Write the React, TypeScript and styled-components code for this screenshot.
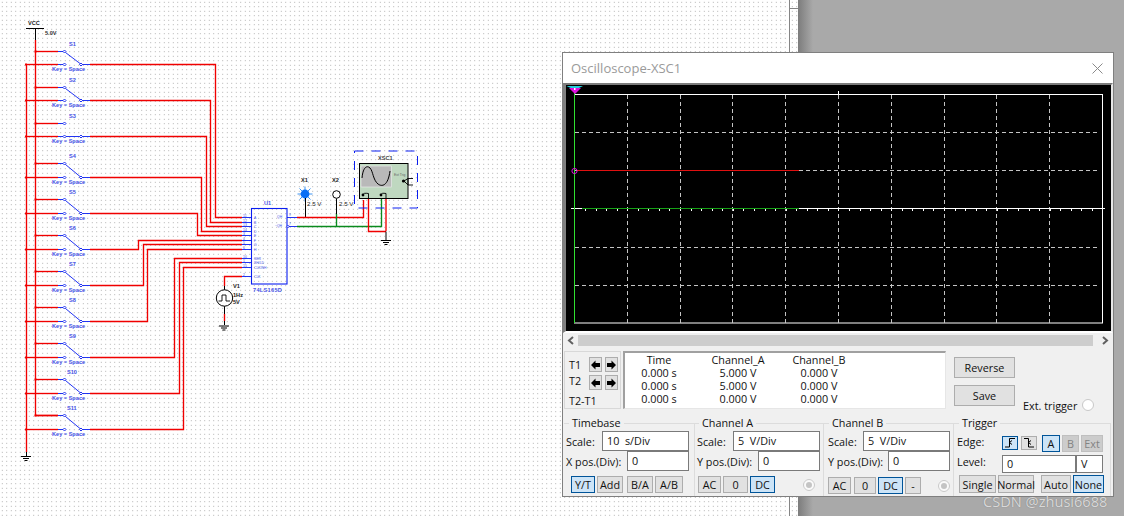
// App.tsx
import React from 'react';
import styled, { createGlobalStyle } from 'styled-components';

const GlobalStyle = createGlobalStyle`
  html, body {
    margin: 0;
    padding: 0;
    background: #a9a9a9;
  }
  body {
    font-family: "Open Sans", "Liberation Sans", sans-serif;
    font-size: 10.8px;
    color: #111;
  }
`;

const RED = '#f00000';
const GREEN = '#0a8a1e';
const BLUE = '#0a1ef0';
const LABEL = '#4652e6';

const redWire = { fill: 'none', stroke: RED, strokeWidth: 1.35 } as const;
const greenWire = { fill: 'none', stroke: GREEN, strokeWidth: 1.35 } as const;

// top contact y, bottom contact y, riser x, chip pin y
const switches = [
  { name: 'S1', top: 51, bottom: 64, riser: 215.5, pin: 217.5 },
  { name: 'S2', top: 87, bottom: 100, riser: 210.5, pin: 222.5 },
  { name: 'S3', top: 123, bottom: 136, riser: 206.5, pin: 226.5, closed: true },
  { name: 'S4', top: 163, bottom: 177, riser: 201.5, pin: 231.5 },
  { name: 'S5', top: 199, bottom: 213, riser: 197.5, pin: 235.5 },
  { name: 'S6', top: 235, bottom: 249, riser: 138.5, pin: 240.5 },
  { name: 'S7', top: 271, bottom: 285, riser: 143.5, pin: 244.5 },
  { name: 'S8', top: 307, bottom: 321, riser: 147.5, pin: 249.5 },
  { name: 'S9', top: 343, bottom: 357, riser: 174.5, pin: 258.5 },
  { name: 'S10', top: 379, bottom: 393, riser: 179.5, pin: 262.5 },
  { name: 'S11', top: 415, bottom: 429, riser: 183.5, pin: 267.5 },
];

const chipPins = [
  ['11', 'A', 217.5], ['12', 'B', 222.5], ['13', 'C', 226.5], ['14', 'D', 231.5],
  ['3', 'E', 235.5], ['4', 'F', 240.5], ['5', 'G', 244.5], ['6', 'H', 249.5],
  ['10', 'SER', 258.5], ['1', 'SH/LD', 262.5], ['15', 'CLKINH', 267.5], ['2', 'CLK', 276.5],
] as const;

const Ground = ({ x, y }: { x: number; y: number }) => (
  <g stroke="#000" strokeWidth="1">
    <path d={`M${x - 5} ${y}H${x + 5}M${x - 3} ${y + 2}H${x + 3}M${x - 1.5} ${y + 4}H${x + 1.5}`} />
  </g>
);

const Switch = ({ s }: { s: (typeof switches)[number] }) => {
  const { name, riser, pin, closed } = s;
  const top = s.top + 0.5;
  const bottom = s.bottom + 0.5;
  return (
    <g>
      <polyline points={`35.5,${top} 58,${top}`} {...redWire} />
      <polyline points={`26.5,${bottom} 58,${bottom}`} {...redWire} />
      <polyline points={`90,${bottom} ${riser},${bottom} ${riser},${pin} 242,${pin}`} {...redWire} />
      <rect x="34.5" y={top - 1} width="2" height="2" fill={RED} />
      <rect x="25" y={bottom - 1} width="2" height="2" fill={RED} />
      <g stroke={BLUE} strokeWidth="0.9" fill="none">
        <path d={`M58 ${top}H63M58 ${bottom}H63M82 ${bottom}H90`} />
        <path d={`M64.5 ${top - 1.5}l1.5 1.5l-1.5 1.5l-1.5 -1.5z`} fill="#fff" />
        <path d={`M64.5 ${bottom - 1.5}l1.5 1.5l-1.5 1.5l-1.5 -1.5z`} fill="#fff" />
        <path d={`M81 ${bottom - 1.5}l1.5 1.5l-1.5 1.5l-1.5 -1.5z`} fill="#fff" />
        {closed ? (
          <path d={`M66 ${bottom}H79.5`} />
        ) : (
          <path d={`M65.5 ${top + 1}L80 ${bottom - 1}`} />
        )}
      </g>
      <SheetLabel x={name.length > 2 ? 67 : 69} y={s.top - 5} fill={LABEL}>{name}</SheetLabel>
      <SheetLabel x={52} y={s.bottom + 7} fill={LABEL}>Key = Space</SheetLabel>
    </g>
  );
};

const Schematic = () => (
  <SheetSvg viewBox="0 0 789 516">
    {/* supply and ground rails */}
    <SheetLabel x={28} y={25}>VCC</SheetLabel>
    <SheetLabel x={45} y={35} fill="#333">5.0V</SheetLabel>
    <path d="M26 28.5H44M35.5 28.5V40" stroke="#000" strokeWidth="1" fill="none" />
    <path d="M35.5 40V415.5H58" {...redWire} />
    <path d="M26.5 64V452" {...redWire} />
    <path d="M26.5 452V456" stroke="#000" strokeWidth="1" />
    <Ground x={26} y={456.5} />

    {switches.map(s => <Switch key={s.name} s={s} />)}

    {/* 74LS165 */}
    <rect x="251.5" y="208.5" width="35.5" height="75.5" fill="none" stroke={BLUE} strokeWidth="1.1" />
    <SheetLabel x={264} y={205} fill={LABEL}>U1</SheetLabel>
    <SheetLabel x={253} y={292} fill={LABEL} style={{ letterSpacing: 0.3 }}>74LS165D</SheetLabel>
    {chipPins.map(([num, name, y]) => (
      <g key={num}>
        <path d={`M242 ${y}H251`} stroke={BLUE} strokeWidth="0.9" />
        <TinyLabel x={243} y={y - 0.6} fill={LABEL}>{num}</TinyLabel>
        <TinyLabel x={254} y={y + 1.2} fill={LABEL}>{name}</TinyLabel>
      </g>
    ))}
    <TinyLabel x={277} y={218} fill={LABEL}>QH</TinyLabel>
    <TinyLabel x={275} y={227} fill={LABEL}>~QH</TinyLabel>
    <TinyLabel x={289} y={216} fill={LABEL}>9</TinyLabel>
    <TinyLabel x={289} y={225} fill={LABEL}>7</TinyLabel>
    <path d="M287 217.5H297M289 226.5H297" stroke={BLUE} strokeWidth="0.9" />
    <circle cx="288" cy="226.5" r="1.1" fill="#fff" stroke={BLUE} strokeWidth="0.7" />

    {/* clock source */}
    <path d="M242 276.5H224.5V286" {...redWire} />
    <path d="M224.5 286V290M224.5 306V314M224.5 321V325" stroke="#000" strokeWidth="1" />
    <path d="M224.5 314V321" {...redWire} />
    <circle cx="224.5" cy="298" r="8.2" fill="#fff" stroke="#000" strokeWidth="1" />
    <path d="M218.5 301H222V295H226V301H230" fill="none" stroke="#000" strokeWidth="0.9" />
    <Ground x={224} y={326} />
    <SheetLabel x={233} y={288}>V1</SheetLabel>
    <SheetLabel x={233} y={297}>1Hz</SheetLabel>
    <SheetLabel x={233} y={304}>5V</SheetLabel>

    {/* probes */}
    <SheetLabel x={301} y={182}>X1</SheetLabel>
    <SheetLabel x={332} y={182}>X2</SheetLabel>
    <path
      d="M305 186.5V201.5M297.5 194H312.5M299.5 188.5L310.5 199.5M310.5 188.5L299.5 199.5"
      stroke="#0a7af0"
      strokeWidth="0.8"
    />
    <circle cx="305" cy="194" r="4.4" fill="#0a70f5" />
    <path d="M305.5 198V217" stroke="#000" strokeWidth="1" />
    <circle cx="336.5" cy="194.5" r="3.8" fill="#fff" stroke="#000" strokeWidth="1" />
    <path d="M336.5 198.5V214" stroke="#000" strokeWidth="1" />
    <Reading x={307} y={206}>2.5 V</Reading>
    <Reading x={339} y={206}>2.5 V</Reading>

    {/* scope wiring */}
    <path d="M297 217.5H363.5V200" {...redWire} />
    <path d="M297 226.5H381.5V196" {...greenWire} />
    <path d="M336.5 214V226" {...greenWire} />
    <path d="M368.5 198V231.5H386" {...redWire} />
    <path d="M386 196V231" {...redWire} />
    <path d="M386 231.5V240" stroke="#000" strokeWidth="1" />
    <Ground x={386} y={240.5} />

    {/* XSC1 */}
    <rect
      x="354.5" y="151" width="63" height="57"
      fill="none" stroke={BLUE} strokeWidth="1" strokeDasharray="9 8"
    />
    <SheetLabel x={378} y={160} fill="#444">XSC1</SheetLabel>
    <rect x="359.5" y="163.5" width="48.5" height="35" fill="#bfd8c0" stroke="#000" strokeWidth="1" />
    <rect x="361" y="166" width="30.5" height="21" fill="#b9b9b9" stroke="#eee" strokeWidth="0.6" />
    <path
      d="M362 178C363 167 367 165 370 168C373 171 373 180 378 184C382 187 388 186 390 171"
      fill="none" stroke="#000" strokeWidth="1"
    />
    <TinyLabel x={394} y={176} fill="#666">Ext Trig</TinyLabel>
    <path d="M363 195.5C363 193 365 193 368.5 193.5V198M381 195.5C381 193 383 193 386 193.5V198" stroke="#000" strokeWidth="0.9" fill="none" />
    <path d="M404 181L408 178.5H413M404 181L408 185H413M408 178.5V185" stroke="#000" strokeWidth="0.9" fill="none" />
    <circle cx="363" cy="195" r="1.4" fill="#000" />
    <circle cx="381" cy="195" r="1.4" fill="#000" />
    <circle cx="403.5" cy="181" r="1.6" fill="#000" />
  </SheetSvg>
);

const gridX = [627.5, 680.5, 732.5, 785.5, 838.5, 891.5, 944.5, 996.5, 1049.5];
const gridY = [132.5, 170.5, 208.5, 247.5, 285.5];
const ticks = Array.from({ length: 50 }, (_, i) => 585.5 + Math.round(i * 10.56));

const ScopeTrace = () => (
  <ScopeSvg viewBox="566 85 544 246">
    <rect x="574.5" y="94.5" width="528" height="228.5" fill="none" stroke="#fff" strokeWidth="1" />
    <g stroke="#c4c4c4" strokeWidth="1" strokeDasharray="4 3" fill="none">
      {gridX.map(x => <path key={x} d={`M${x} 95V323`} />)}
      {gridY.map(y => <path key={y} d={`M575 ${y}H1100`} />)}
    </g>
    <path d="M838.5 91V95" stroke="#fff" />
    {ticks.map(x => <path key={x} d={`M${x} 208V211`} stroke="#fff" strokeWidth="1" />)}
    <path d="M799 208.5H1105M571 208.5H582" stroke="#fff" strokeWidth="1" />
    <path d="M582 208.5H799" stroke="#16a016" strokeWidth="1" />
    <path d="M577 170.5H799" stroke="#e01010" strokeWidth="1" />
    <path d="M574.5 90V323" stroke="#30e030" strokeWidth="1" />
    <path d="M566.5 86H583L575 90z" fill="#20d0e0" />
    <path d="M569 88H581L575 94z" fill="#e010e0" />
    <rect x="574" y="88" width="1.5" height="2" fill="#fff" />
    <circle cx="574.5" cy="171" r="2.6" fill="none" stroke="#e010e0" strokeWidth="1" />
  </ScopeSvg>
);

const Arrow = ({ dir }: { dir: 'left' | 'right' }) => (
  <svg width="11" height="10" viewBox="0 0 11 10">
    <path
      d="M1 5L5.5 0.5V3H10V7H5.5V9.5z"
      fill="#000"
      transform={dir === 'right' ? 'rotate(180 5.5 5)' : undefined}
    />
  </svg>
);

const Chevron = ({ dir }: { dir: 'left' | 'right' }) => (
  <svg width="8" height="9" viewBox="0 0 8 9">
    <path
      d={dir === 'left' ? 'M6 1L2 4.5L6 8' : 'M2 1L6 4.5L2 8'}
      fill="none"
      stroke="#606060"
      strokeWidth="2"
    />
  </svg>
);

const readings = [
  ['0.000 s', '5.000 V', '0.000 V'],
  ['0.000 s', '5.000 V', '0.000 V'],
  ['0.000 s', '0.000 V', '0.000 V'],
];

export default function App() {
  return (
    <>
      <GlobalStyle />
      <Desktop>
        <Sheet>
          <Schematic />
        </Sheet>
        <SheetMargin>
          <MarginCorner />
        </SheetMargin>
        <Workspace />

        <ScopeWindow>
          <TitleBar>
            <WindowTitle>Oscilloscope-XSC1</WindowTitle>
            <CloseIcon viewBox="0 0 11 11">
              <path d="M0.5 0.5L10.5 10.5M10.5 0.5L0.5 10.5" stroke="#8a8a8a" strokeWidth="1" />
            </CloseIcon>
          </TitleBar>

          <ScopeFrame>
            <ScopeTrace />
          </ScopeFrame>

          <ScrollBar>
            <Chevron dir="left" />
            <ScrollThumb />
            <Chevron dir="right" />
          </ScrollBar>

          <ReadoutRow>
            <CursorPanel>
              <CursorRow>
                <CursorName>T1</CursorName>
                <ArrowButton><Arrow dir="left" /></ArrowButton>
                <ArrowButton><Arrow dir="right" /></ArrowButton>
              </CursorRow>
              <CursorRow>
                <CursorName $raised>T2</CursorName>
                <ArrowButton><Arrow dir="left" /></ArrowButton>
                <ArrowButton><Arrow dir="right" /></ArrowButton>
              </CursorRow>
              <CursorDelta>T2-T1</CursorDelta>
            </CursorPanel>

            <ReadoutTable>
              <span>Time</span>
              <span>Channel_A</span>
              <span>Channel_B</span>
              {readings.flat().map((v, i) => <span key={i}>{v}</span>)}
            </ReadoutTable>

            <SideButtons>
              <SideButton>Reverse</SideButton>
              <SideButton>Save</SideButton>
            </SideButtons>

            <ExtTrigger>
              Ext. trigger
              <RoundPin />
            </ExtTrigger>
          </ReadoutRow>

          <ControlsRow>
            <Group $width={131} $left={2} $right={5}>
              <GroupTitle $shift={3}>Timebase</GroupTitle>
              <FieldRow>
                <FieldLabel>Scale:</FieldLabel>
                <Field $width={87}>10  s/Div</Field>
              </FieldRow>
              <FieldRow>
                <FieldLabel>X pos.(Div):</FieldLabel>
                <Field $width={62}>0</Field>
              </FieldRow>
              <ButtonRow $inset={5} $top={5}>
                <ToggleButton $width={24} $on>Y/T</ToggleButton>
                <ToggleButton $width={26}>Add</ToggleButton>
                <ToggleButton $width={26} $gap={2}>B/A</ToggleButton>
                <ToggleButton $width={28}>A/B</ToggleButton>
              </ButtonRow>
            </Group>

            <Group $width={129} $left={2} $right={3}>
              <GroupTitle $shift={2}>Channel A</GroupTitle>
              <FieldRow>
                <FieldLabel>Scale:</FieldLabel>
                <Field $width={87}>5  V/Div</Field>
              </FieldRow>
              <FieldRow>
                <FieldLabel>Y pos.(Div):</FieldLabel>
                <Field $width={62}>0</Field>
              </FieldRow>
              <ButtonRow $inset={1} $top={5}>
                <ToggleButton $width={23}>AC</ToggleButton>
                <ToggleButton $width={25}>0</ToggleButton>
                <ToggleButton $width={25} $on>DC</ToggleButton>
                <RadioPin $right={5} />
              </ButtonRow>
            </Group>

            <Group $width={130} $left={4} $right={3}>
              <GroupTitle $shift={1}>Channel B</GroupTitle>
              <FieldRow>
                <FieldLabel>Scale:</FieldLabel>
                <Field $width={87}>5  V/Div</Field>
              </FieldRow>
              <FieldRow>
                <FieldLabel>Y pos.(Div):</FieldLabel>
                <Field $width={62}>0</Field>
              </FieldRow>
              <ButtonRow $inset={0} $top={6}>
                <ToggleButton $width={23}>AC</ToggleButton>
                <ToggleButton $width={22} $gap={1}>0</ToggleButton>
                <ToggleButton $width={25} $on>DC</ToggleButton>
                <ToggleButton $width={16}>-</ToggleButton>
                <RadioPin $right={0} />
              </ButtonRow>
            </Group>

            <Group $width={157} $left={2} $right={5}>
              <GroupTitle $shift={3}>Trigger</GroupTitle>
              <FieldRow>
                <TriggerLabel>Edge:</TriggerLabel>
                <EdgeButton $on>
                  <svg width="11" height="11" viewBox="0 0 11 11">
                    <path d="M0 10H4.5V1.5H10M4.5 5.5L7 3.5M4.5 5.5L7 7.5" fill="none" stroke="#000" strokeWidth="1" />
                  </svg>
                </EdgeButton>
                <EdgeButton>
                  <svg width="11" height="11" viewBox="0 0 11 11">
                    <path d="M0 1.5H4.5V10H10M4.5 5.5L7 3.5M4.5 5.5L7 7.5" fill="none" stroke="#000" strokeWidth="1" />
                  </svg>
                </EdgeButton>
                <SourceButton $width={18} $gap={2} $on>A</SourceButton>
                <SourceButton $width={17} $off>B</SourceButton>
                <SourceButton $width={22} $off>Ext</SourceButton>
              </FieldRow>
              <LevelRow>
                <LevelLabel>Level:</LevelLabel>
                <LevelField $width={74}>0</LevelField>
                <LevelField $width={27}>V</LevelField>
              </LevelRow>
              <ButtonRow $inset={3} $top={2}>
                <TallButton $width={37}>Single</TallButton>
                <TallButton $width={36}>Normal</TallButton>
                <TallButton $width={30} $gap={5}>Auto</TallButton>
                <TallButton $width={31} $on>None</TallButton>
              </ButtonRow>
            </Group>
          </ControlsRow>
        </ScopeWindow>

        <Watermark>CSDN @zhusi6688</Watermark>
      </Desktop>
    </>
  );
}

const dots = `
  background-color: #fff;
  background-image: radial-gradient(circle at center, #a0a0a0 0.55px, transparent 0.75px);
  background-size: 4.5px 4.5px;
`;

const Desktop = styled.div`
  position: relative;
  display: flex;
  width: 1124px;
  height: 516px;
  overflow: hidden;
`;

const Sheet = styled.div`
  ${dots}
  width: 789px;
  height: 100%;
  border-right: 1px solid #858585;
  flex: none;
`;

const SheetSvg = styled.svg`
  display: block;
  width: 789px;
  height: 516px;
`;

const SheetLabel = styled.text`
  font-family: "Liberation Sans", sans-serif;
  font-size: 5.6px;
  font-weight: 700;
  fill: ${p => p.fill || '#222'};
`;

const Reading = styled.text`
  font-family: "Liberation Sans", sans-serif;
  font-size: 6.2px;
  fill: #222;
`;

const TinyLabel = styled.text`
  font-family: "Liberation Sans", sans-serif;
  font-size: 3.4px;
`;

const SheetMargin = styled.div`
  ${dots}
  width: 8px;
  flex: none;
`;

const MarginCorner = styled.div`
  height: 8px;
  border-bottom: 1px solid #858585;
`;

const Workspace = styled.div`
  flex: 1;
  background: linear-gradient(90deg, #7c7c7c 0, #a9a9a9 15px);
`;

const ScopeWindow = styled.div`
  position: absolute;
  left: 562px;
  top: 52px;
  width: 552px;
  height: 445px;
  box-sizing: border-box;
  border: 1px solid #7f7f7f;
  background: #f0f0f0;
  display: flex;
  flex-direction: column;
`;

const TitleBar = styled.div`
  height: 30px;
  flex: none;
  background: #fff;
  display: flex;
  align-items: center;
  justify-content: space-between;
  padding: 0 10px 0 8px;
`;

const WindowTitle = styled.div`
  font-size: 13px;
  color: #9a9a9a;
`;

const CloseIcon = styled.svg`
  width: 11px;
  height: 11px;
`;

const ScopeFrame = styled.div`
  height: 250px;
  flex: none;
  box-sizing: border-box;
  border-top: 2px solid #7b7b7b;
  border-left: 3px solid #808080;
  border-right: 2px solid #e8e8e8;
  border-bottom: 2px solid #fff;
  background: #000;
`;

const ScopeSvg = styled.svg`
  display: block;
  width: 544px;
  height: 246px;
`;

const ScrollBar = styled.div`
  height: 15px;
  flex: none;
  display: flex;
  align-items: center;
  gap: 3px;
  padding: 0 4px;
`;

const ScrollThumb = styled.div`
  flex: 1;
  height: 11px;
  background: #cdcdcd;
  margin-right: 5px;
`;

const ReadoutRow = styled.div`
  display: flex;
  height: 58px;
  margin-top: 3px;
  padding-left: 1px;
`;

const CursorPanel = styled.div`
  width: 57px;
  box-sizing: border-box;
  border: 1px solid #d8d8d8;
  padding: 5px 2px 0 4px;
  margin-right: 2px;
`;

const CursorRow = styled.div`
  display: flex;
  align-items: center;
  gap: 3px;
  height: 15px;
  margin-bottom: 3px;
`;

const CursorName = styled.span<{ $raised?: boolean }>`
  width: 17px;
  flex: none;
  line-height: 11px;
  align-self: ${p => (p.$raised ? 'flex-start' : 'center')};
`;

const CursorDelta = styled.div`
  margin-top: 2px;
`;

const ArrowButton = styled.div`
  width: 14px;
  height: 15px;
  box-sizing: border-box;
  background: #e1e1e1;
  border: 1px solid #adadad;
  display: flex;
  align-items: center;
  justify-content: center;
`;

const ReadoutTable = styled.div`
  width: 323px;
  box-sizing: border-box;
  background: #fff;
  border-top: 2px solid #a0a0a0;
  border-left: 2px solid #a0a0a0;
  border-right: 1px solid #e6e6e6;
  border-bottom: 1px solid #e6e6e6;
  display: grid;
  grid-template-columns: 68px 90px 72px;
  grid-auto-rows: 13px;
  justify-items: center;
  align-items: center;
  line-height: 13px;
`;

const SideButtons = styled.div`
  display: flex;
  flex-direction: column;
  gap: 7px;
  margin: 6px 0 0 8px;
  width: 61px;
`;

const SideButton = styled.div`
  height: 21px;
  box-sizing: border-box;
  background: #e1e1e1;
  border: 1px solid #adadad;
  display: flex;
  align-items: center;
  justify-content: center;
`;

const ExtTrigger = styled.div`
  display: flex;
  align-items: center;
  gap: 5px;
  margin: 47px 0 0 8px;
  height: 14px;
  white-space: nowrap;
`;

const RoundPin = styled.span`
  width: 12px;
  height: 12px;
  box-sizing: border-box;
  border-radius: 50%;
  border: 1px solid #c8c8c8;
  background: #fff;
`;

const ControlsRow = styled.div`
  display: flex;
  margin-top: auto;
  padding-left: 1px;
`;

const Group = styled.fieldset<{ $width: number; $left: number; $right: number }>`
  width: ${p => p.$width}px;
  height: 80px;
  box-sizing: border-box;
  margin: 0;
  min-width: 0;
  padding: 1px ${p => p.$right}px 0 ${p => p.$left}px;
  border: 0;
  border-top: 1px solid #dcdcdc;
  border-right: 1px solid #dcdcdc;
  display: flex;
  flex-direction: column;
`;

const GroupTitle = styled.legend<{ $shift: number }>`
  padding: 0 3px;
  margin-left: ${p => p.$shift}px;
  line-height: 14px;
`;

const FieldRow = styled.div`
  display: flex;
  align-items: center;
  height: 20px;
`;

const LevelRow = styled(FieldRow)`
  height: 18px;
  margin-top: 4px;
`;

const FieldLabel = styled.span`
  flex: 1;
  white-space: nowrap;
`;

const TriggerLabel = styled.span`
  width: 46px;
  flex: none;
  padding-left: 1px;
  box-sizing: border-box;
`;

const LevelLabel = styled(TriggerLabel)`
  margin-top: -5px;
`;

const Field = styled.div<{ $width: number }>`
  width: ${p => p.$width}px;
  height: 20px;
  box-sizing: border-box;
  border: 1px solid #7a7a7a;
  background: #fff;
  padding-left: 4px;
  line-height: 17px;
  white-space: pre;
  flex: none;
`;

const LevelField = styled(Field)`
  height: 18px;
  line-height: 15px;
`;

const ButtonRow = styled.div<{ $inset: number; $top: number }>`
  display: flex;
  align-items: center;
  gap: 2px;
  margin-top: ${p => p.$top}px;
  padding-left: ${p => p.$inset}px;
`;

const buttonLook = (on?: boolean) => `
  background: ${on ? '#cce4f7' : '#e1e1e1'};
  border: 1px solid ${on ? '#005499' : '#adadad'};
`;

const ToggleButton = styled.div<{ $width: number; $on?: boolean; $gap?: number }>`
  ${p => buttonLook(p.$on)}
  width: ${p => p.$width}px;
  height: 17px;
  margin-left: ${p => p.$gap || 0}px;
  box-sizing: border-box;
  display: flex;
  align-items: center;
  justify-content: center;
  flex: none;
`;

const TallButton = styled(ToggleButton)`
  height: 18px;
`;

const EdgeButton = styled.div<{ $on?: boolean }>`
  ${p => buttonLook(p.$on)}
  width: 16px;
  height: 14px;
  margin: 3px 3px 0 0;
  box-sizing: border-box;
  display: flex;
  align-items: center;
  justify-content: center;
  flex: none;
`;

const SourceButton = styled.div<{ $width: number; $on?: boolean; $off?: boolean; $gap?: number }>`
  ${p => buttonLook(p.$on)}
  width: ${p => p.$width}px;
  height: 17px;
  margin: 5px 2px 0 ${p => p.$gap || 0}px;
  box-sizing: border-box;
  display: flex;
  align-items: center;
  justify-content: center;
  flex: none;
  ${p => p.$off && 'background: #ccc; border-color: #bfbfbf; color: #838383;'}
`;

const RadioPin = styled.span<{ $right: number }>`
  width: 12px;
  height: 12px;
  margin-left: auto;
  margin-right: ${p => p.$right}px;
  box-sizing: border-box;
  border-radius: 50%;
  border: 3px solid #fafafa;
  outline: 1px solid #c8c8c8;
  outline-offset: -1px;
  background: #c4c4c4;
`;

const Watermark = styled.div`
  position: absolute;
  left: 983px;
  top: 492px;
  font-size: 14.6px;
  line-height: 18px;
  color: rgba(235, 235, 235, 0.85);
  text-shadow: 0 0 1px rgba(90, 90, 90, 0.7);
  white-space: nowrap;
`;
